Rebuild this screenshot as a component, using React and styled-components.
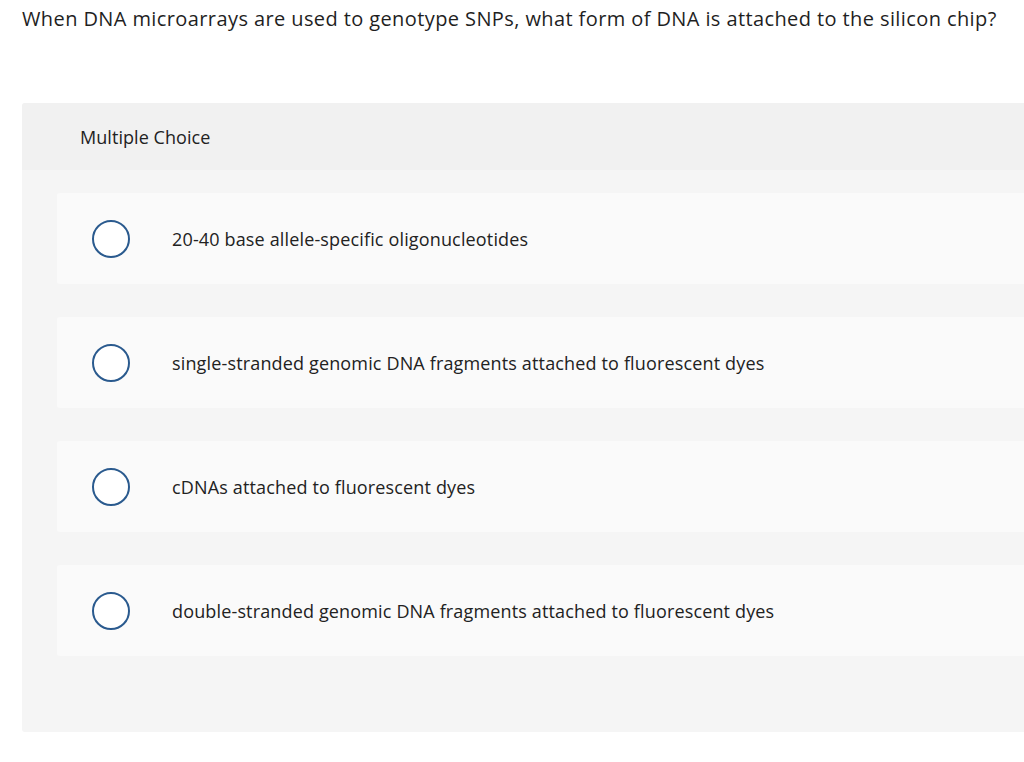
import React from 'react';
import styled, { createGlobalStyle } from 'styled-components';

const GlobalStyle = createGlobalStyle`
  html, body {
    margin: 0;
    padding: 0;
    background: #ffffff;
    overflow: hidden;
  }
  body {
    font-family: "Open Sans", "Liberation Sans", sans-serif;
    color: #222222;
  }
`;

const Page = styled.div`
  width: 1060px;
  padding: 5px 0 0 22px;
  box-sizing: border-box;
`;

const Question = styled.h1`
  margin: 0;
  font-size: 20px;
  font-weight: 400;
  line-height: 28px;
  color: #1f1f1f;
  letter-spacing: 0.4px;
`;

const Panel = styled.section`
  margin-top: 70px;
  background: #f5f5f5;
  border-radius: 3px 0 0 3px;
  padding-bottom: 76px;
`;

const PanelHeader = styled.div`
  height: 67px;
  background: #f1f1f1;
  display: flex;
  align-items: center;
  padding-left: 58px;
  font-size: 18px;
  letter-spacing: 0.05px;
  color: #222222;
  border-radius: 3px 0 0 0;
`;

const Options = styled.div`
  display: flex;
  flex-direction: column;
  gap: 33px;
  padding: 23px 0 0 35px;
`;

const Option = styled.label`
  height: 91px;
  background: #fafafa;
  border-radius: 3px 0 0 3px;
  display: flex;
  align-items: center;
  padding-left: 35px;
  cursor: pointer;
`;

const Radio = styled.span`
  width: 34px;
  height: 34px;
  border: 2px solid #2a5a8e;
  border-radius: 50%;
  background: #ffffff;
  flex-shrink: 0;
`;

const OptionText = styled.span`
  margin-left: 42px;
  font-size: 18px;
  letter-spacing: 0.15px;
  color: #222222;
`;

const choices = [
  '20-40 base allele-specific oligonucleotides',
  'single-stranded genomic DNA fragments attached to fluorescent dyes',
  'cDNAs attached to fluorescent dyes',
  'double-stranded genomic DNA fragments attached to fluorescent dyes',
];

export default function App() {
  return (
    <>
      <GlobalStyle />
      <Page>
        <Question>
          When DNA microarrays are used to genotype SNPs, what form of DNA is attached to the silicon chip?
        </Question>
        <Panel>
          <PanelHeader>Multiple Choice</PanelHeader>
          <Options>
            {choices.map((c) => (
              <Option key={c}>
                <Radio />
                <OptionText>{c}</OptionText>
              </Option>
            ))}
          </Options>
        </Panel>
      </Page>
    </>
  );
}
